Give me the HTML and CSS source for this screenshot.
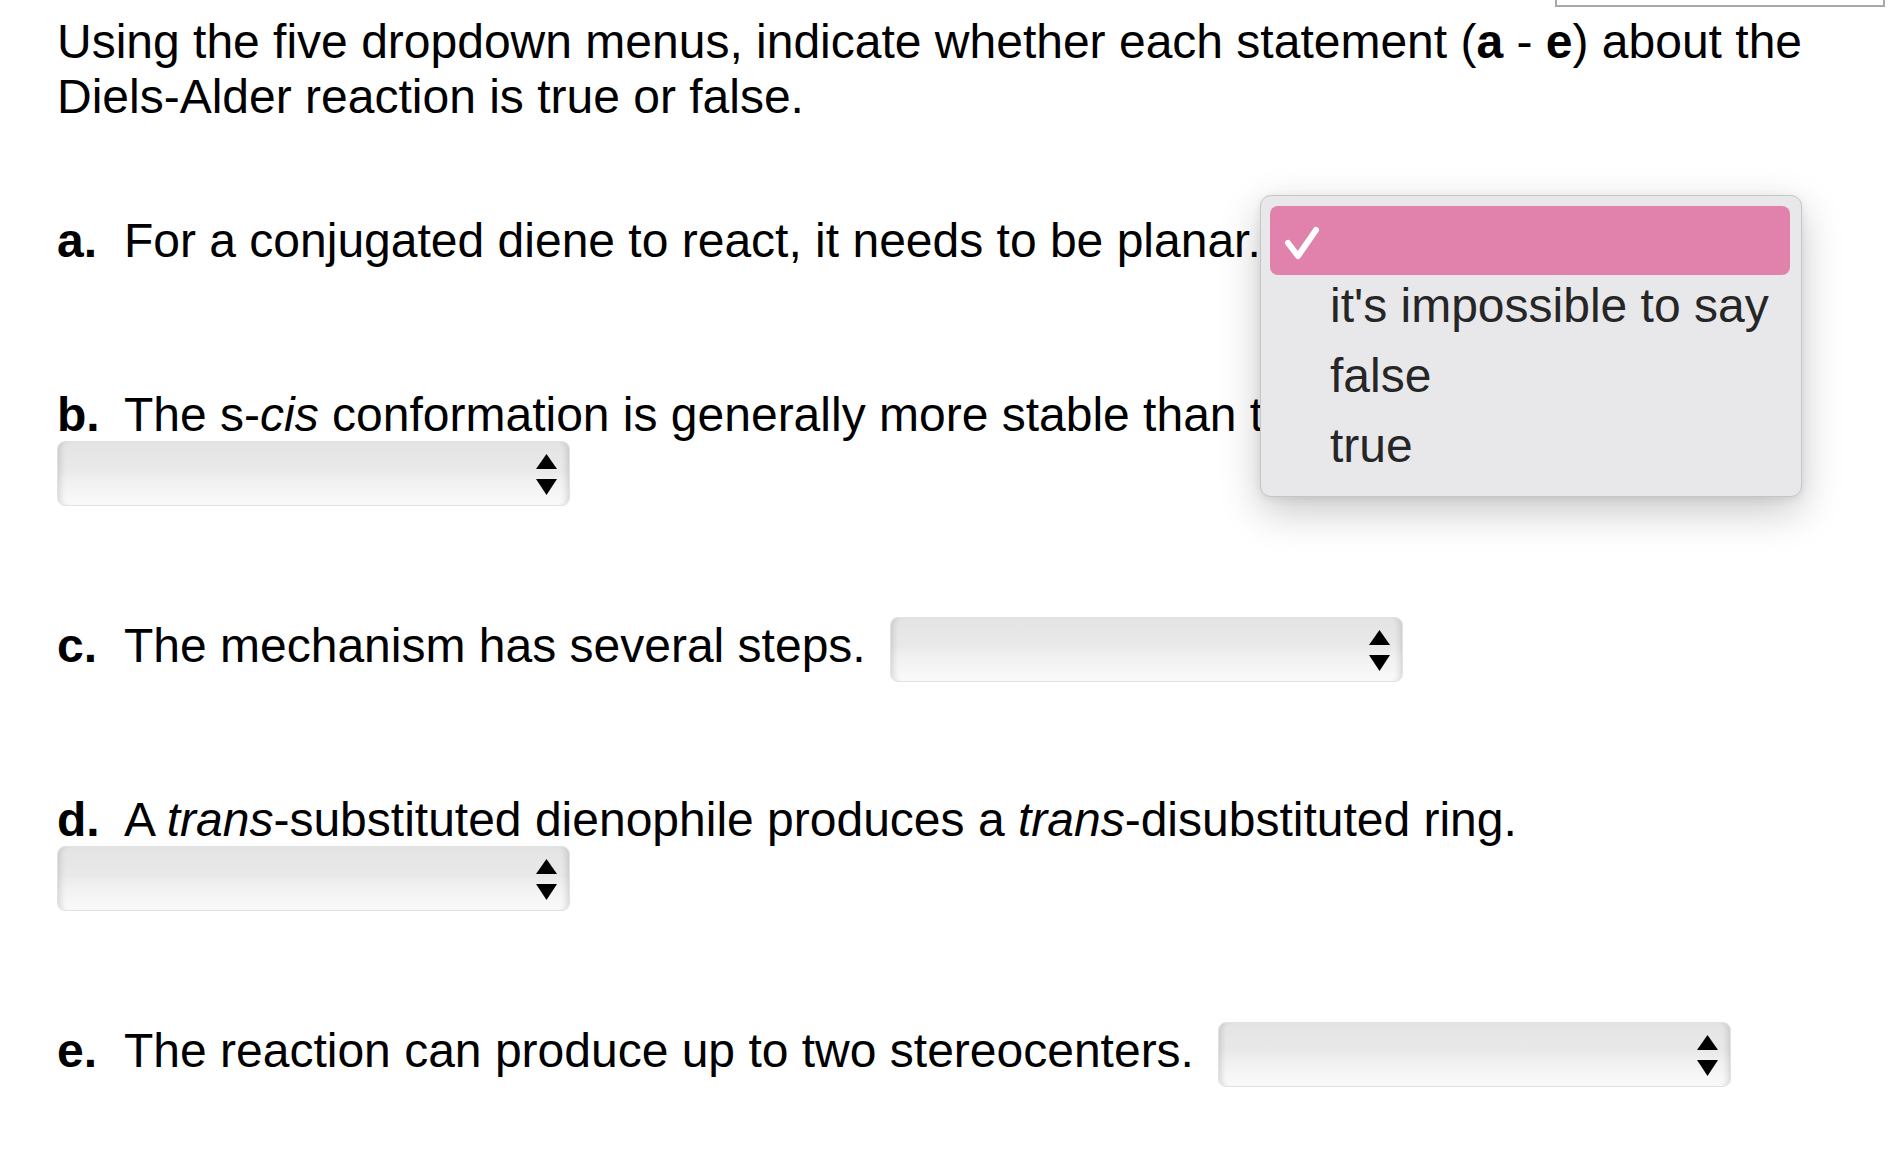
FILE: index.html
```html
<!DOCTYPE html>
<html lang="en">
<head>
<meta charset="utf-8">
<title>Diels-Alder reaction</title>
<link rel="stylesheet" href="styles.css">
</head>
<body>
<div class="topbar"><div class="stub"></div></div>
<main class="page">
  <p class="intro">Using the five dropdown menus, indicate whether each statement (<b>a</b> - <b>e</b>) about the Diels-Alder reaction is true or false.</p>

  <p class="row"><span class="lbl">a.</span><span class="txt">For a conjugated diene to react, it needs to be planar.</span> <span class="dd"><span class="dd-in"><svg class="arr" viewBox="0 0 21 41" width="21" height="41"><polygon points="10.5,0 21,15 0,15"/><polygon points="0,25 21,25 10.5,41"/></svg></span></span></p>

  <p class="row"><span class="lbl">b.</span><span class="txt">The s-<i>cis</i> conformation is generally more stable than the s-<i>trans</i> conformation.</span> <span class="dd"><span class="dd-in"><svg class="arr" viewBox="0 0 21 41" width="21" height="41"><polygon points="10.5,0 21,15 0,15"/><polygon points="0,25 21,25 10.5,41"/></svg></span></span></p>

  <p class="row"><span class="lbl">c.</span><span class="txt">The mechanism has several steps.</span> <span class="dd"><span class="dd-in"><svg class="arr" viewBox="0 0 21 41" width="21" height="41"><polygon points="10.5,0 21,15 0,15"/><polygon points="0,25 21,25 10.5,41"/></svg></span></span></p>

  <p class="row"><span class="lbl">d.</span><span class="txt">A <i>trans</i>-substituted dienophile produces a <i>trans</i>-disubstituted ring.</span> <span class="dd"><span class="dd-in"><svg class="arr" viewBox="0 0 21 41" width="21" height="41"><polygon points="10.5,0 21,15 0,15"/><polygon points="0,25 21,25 10.5,41"/></svg></span></span></p>

  <p class="row"><span class="lbl">e.</span><span class="txt">The reaction can produce up to two stereocenters.</span> <span class="dd"><span class="dd-in"><svg class="arr" viewBox="0 0 21 41" width="21" height="41"><polygon points="10.5,0 21,15 0,15"/><polygon points="0,25 21,25 10.5,41"/></svg></span></span></p>
</main>

<div class="menu" role="listbox">
  <div class="opt sel"><svg class="check" viewBox="0 0 36 34" width="36" height="34"><polyline points="4,17 14,30 32,4"/></svg></div>
  <div class="opt">it's impossible to say</div>
  <div class="opt">false</div>
  <div class="opt">true</div>
</div>
</body>
</html>
```

FILE: styles.css
```css
html, body {
  margin: 0;
  padding: 0;
  background: #ffffff;
}

body {
  font-family: "Liberation Sans", Arial, Helvetica, sans-serif;
  color: #000;
  width: 1896px;
  min-height: 1170px;
  overflow: hidden;
}

.topbar {
  height: 0;
  display: flex;
  justify-content: flex-end;
  padding-right: 11px;
}

.stub {
  width: 330px;
  height: 7px;
  box-sizing: border-box;
  border: 2px solid #a9a9a9;
  border-top: none;
  flex: none;
}

.page {
  padding: 14px 40px 0 57px;
}

.intro {
  margin: 0 0 88px 0;
  font-size: 48px;
  line-height: 55px;
}

.row {
  margin: 0 0 111px 0;
  font-size: 48px;
  line-height: 53px;
}

.lbl {
  display: inline-block;
  width: 67px;
  font-weight: bold;
}

.txt {
  padding-right: 11px;
}

.dd {
  display: inline-block;
  vertical-align: -20px;
  overflow: hidden;
  width: 513px;
  height: 65px;
  box-sizing: border-box;
  border: 1px solid #e2e2e2;
  border-radius: 8px;
  background: linear-gradient(to bottom, #e4e4e4 0%, #e9e9e9 45%, #f0f0f0 60%, #fafafa 100%);
  box-shadow: inset 7px 0 6px -5px rgba(0, 0, 0, 0.14), inset -7px 0 6px -5px rgba(0, 0, 0, 0.14);
}

.dd-in {
  display: flex;
  height: 100%;
  align-items: center;
  justify-content: flex-end;
  padding-right: 12px;
}

.arr {
  display: block;
  fill: #000;
  margin-top: 2px;
}

.menu {
  position: absolute;
  left: 1260px;
  top: 195px;
  width: 542px;
  box-sizing: border-box;
  padding: 10px 11px 11px 9px;
  background: #e8e8ea;
  border: 1px solid #c6c6c8;
  border-radius: 11px;
  box-shadow: 0 14px 40px rgba(0, 0, 0, 0.22), 0 2px 8px rgba(0, 0, 0, 0.08);
  font-family: "Liberation Sans", Arial, Helvetica, sans-serif;
  font-size: 48px;
  color: #262626;
}

.opt {
  height: 70px;
  line-height: 61px;
  padding-left: 60px;
  white-space: nowrap;
}

.opt.sel {
  display: flex;
  align-items: center;
  padding-left: 14px;
  height: 69px;
  background: #e182ad;
  border-radius: 8px;
}

.check {
  display: block;
  margin-top: 4px;
  fill: none;
  stroke: #ffffff;
  stroke-width: 6;
  stroke-linecap: round;
  stroke-linejoin: round;
}
```
